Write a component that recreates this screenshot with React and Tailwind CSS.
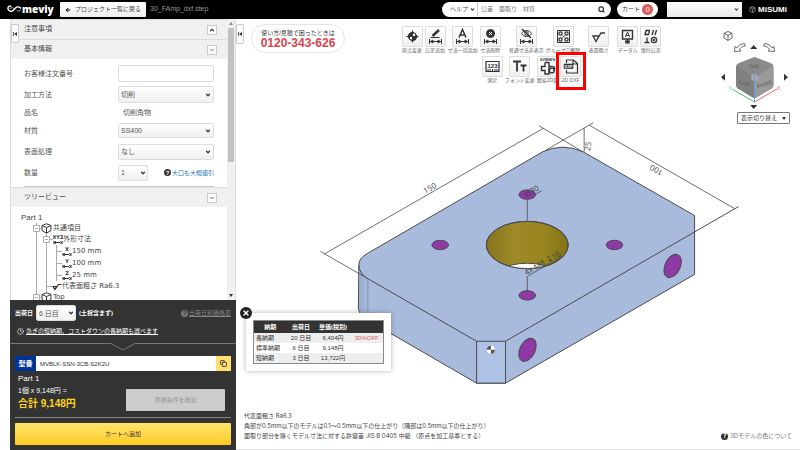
import { useState } from "react";
import { ArrowLeft, ChevronDown, ChevronUp, Search, Clock, Copy, X } from "lucide-react";

const JP = "font-['Liberation_Sans','Noto_Sans_CJK_JP',sans-serif]";

/* ---------- small parts ---------- */

function Select({ label, options, className, chevron = "right-[3px]" }) {
    return (
        <div className={"relative " + className}>
            <select
                aria-label={label}
                className="block h-full w-full appearance-none rounded-[2px] border border-[#ddd] bg-linear-to-b from-white to-[#f0f0f0] pl-[2px] text-[7px] leading-none text-[#555]"
            >
                {options.map((o) => (
                    <option key={o}>{o}</option>
                ))}
            </select>
            <ChevronDown size={6} strokeWidth={5} className={"pointer-events-none absolute top-1/2 -translate-y-1/2 text-[#333] " + chevron} />
        </div>
    );
}

function SectionHead({ title, open, onToggle }) {
    return (
        <div className="flex h-[20px] items-center justify-between border-t border-[#ddd] bg-[#f0f0f0] pr-[10px] pl-[13px] text-[7px] text-[#444]">
            <h2>{title}</h2>
            <button aria-label={title} onClick={onToggle} className="flex size-[10px] items-center justify-center border border-[#ccc] bg-[#fafafa]">
                {open ? <ChevronDown size={6} strokeWidth={3} /> : <ChevronUp size={6} strokeWidth={5} />}
            </button>
        </div>
    );
}

function Help({ className }) {
    return (
        <span className={"flex size-[7px] items-center justify-center rounded-full text-[6px] leading-none font-bold " + className}>?</span>
    );
}

function PanelTab({ className }) {
    return (
        <button aria-label="パネルを開閉" className={"absolute flex w-[8px] items-center justify-center rounded-[1px] border border-[#ccc] bg-[#fafafa] " + className}>
            <svg viewBox="0 0 5 5" className="size-[4px]" fill="#333">
                <path d="M0 0h1v5H0zM5 0v5L1.500 2.500z" />
            </svg>
        </button>
    );
}

/* ---------- header ---------- */

function Header() {
    return (
        <header className="flex h-[19px] shrink-0 items-center bg-black text-[6px]">
            <a href="#meviy" className="ml-[7px] flex w-[49px] items-center pb-[1px] text-white">
                <svg viewBox="0 0 16 8" className="h-[8px] w-[15px] shrink-0" fill="none" stroke="#fff" strokeWidth="1.500" strokeLinecap="round">
                    <path d="M4 1C1 .500.500 3 1.500 5c1 1.500 3.500 2 5 .500L9 3c1.500-1.500 4-1.500 5.500 0" />
                    <path d="M3 3.500c2-1.500 4-1 5 .500M10.500 5.500c1 1.200 3.500 1.200 4-.500" stroke="#bbb" strokeWidth="1" />
                </svg>
                <span className="font-['Open_Sans',sans-serif] text-[10px] leading-none font-extrabold">meviy</span>
            </a>
            <button className="ml-[4px] flex h-[15px] w-[86px] items-center rounded-[1px] bg-linear-to-b from-white to-[#eee] pl-[5px] whitespace-nowrap text-[#444]">
                <ArrowLeft size={6} strokeWidth={4} className="mr-[4px] text-black" />
                プロジェクト一覧に戻る
            </button>
            <span className="ml-[4px] text-[7px] text-[#999]">30_FAmp_dxf.step</span>

            <form className="ml-auto flex h-[15px] w-[169px] items-center rounded-full bg-white pr-[6px] text-[#555]">
                <div className="relative h-full w-[36px] border-r border-[#ccc]">
                    <select aria-label="検索対象" className="h-full w-full appearance-none pl-[8px] text-[6px]">
                        <option>ヘルプ</option>
                    </select>
                    <ChevronDown size={5} strokeWidth={5} className="pointer-events-none absolute top-[5px] right-[2px] text-[#222]" />
                </div>
                <input aria-label="検索" placeholder="公差　面取り　材質" className="min-w-0 flex-1 pl-[3px] text-[6px] outline-none placeholder:text-[#777]" />
                <button type="button" aria-label="検索する">
                    <Search size={7} strokeWidth={4} className="text-[#333]" />
                </button>
            </form>
            <a href="#cart" className="ml-[6px] flex h-[15px] w-[41px] items-center justify-between rounded-full bg-white pr-[5px] pl-[5px] text-[#333]">
                カート
                <span className="flex size-[11px] items-center justify-center rounded-full bg-[#e05c5c] text-[7px] leading-none text-white">0</span>
            </a>
            <div className="relative ml-[9px] h-[15px] w-[75px]">
                <select aria-label="アカウント" className="h-full w-full appearance-none bg-linear-to-b from-white to-[#e8e8e8]"></select>
                <ChevronDown size={5} strokeWidth={5} className="pointer-events-none absolute top-[5px] right-[3px] text-[#333]" />
            </div>
            <a href="#misumi" className="mr-[13px] ml-[7px] flex items-center gap-[2px] text-[8px] leading-none font-bold text-white">
                <svg viewBox="0 0 8 8" className="size-[7px]" fill="none" stroke="#999" strokeWidth=".8">
                    <path d="M4 .500 7 2v4L4 7.500 1 6V2zM1 2l3 2 3-2M4 4v3.500M2.500 1.200 5.500 3" />
                </svg>
                MiSUMi
            </a>
        </header>
    );
}

/* ---------- left panel ---------- */

function Field({ label, children, height = "h-[21px]" }) {
    return (
        <div className={"flex items-center pr-[13px] pl-[13px] " + height}>
            <span className="w-[94px] shrink-0">{label}</span>
            {children}
        </div>
    );
}

function BasicInfo() {
    return (
        <div className="bg-white pt-[4px] text-[7px] leading-none text-[#555]">
            <label className="flex h-[21px] items-center pr-[13px] pl-[13px]">
                <span className="w-[94px] shrink-0">お客様注文番号</span>
                <input type="text" className="h-[17px] min-w-0 flex-1 rounded-[2px] border border-[#ddd] px-[3px]" />
            </label>
            <Field label="加工方法">
                <Select label="加工方法" options={["切削"]} className="h-[17px] flex-1" />
            </Field>
            <Field label="品名" height="h-[15px]">
                <span className="pl-[5px]">切削角物</span>
            </Field>
            <Field label="材質">
                <Select label="材質" options={["SS400"]} className="h-[15px] flex-1" />
            </Field>
            <Field label="表面処理">
                <Select label="表面処理" options={["なし"]} className="h-[16px] flex-1" />
            </Field>
            <Field label="数量">
                <Select label="数量" options={["1"]} className="h-[16px] w-[30px]" chevron="right-[2px]" />
                <Help className="ml-auto bg-[#333] text-white" />
                <a href="#discount" className="ml-[1px] text-[6px] whitespace-nowrap text-[#1a6db5]">大口も大幅値引</a>
            </Field>
            <hr className="mx-[13px] mt-[3px] border-[#ccc]" />
        </div>
    );
}

function Minus() {
    return (
        <svg viewBox="0 0 7 7" className="-ml-[4px] size-[7px] shrink-0" fill="#fff" stroke="#aaa">
            <path d="M.500.500h6v6h-6zM2 3.500h3" />
        </svg>
    );
}

function Dash() {
    return <span className="w-[5px] shrink-0 border-t border-[#aaa]" />;
}

function CubeIcon() {
    return (
        <svg viewBox="0 0 11 11" className="mr-[1px] size-[11px] shrink-0" fill="none" stroke="#333" strokeWidth="1">
            <path d="M5.500.800 10 2.500v5L5.500 10.200 1 7.500v-5zM1 2.500l4.500 2 4.500-2M5.500 4.500v5.500" />
        </svg>
    );
}

function AxisIcon({ name }) {
    return (
        <svg viewBox="0 0 10 11" className="h-[11px] w-[10px] shrink-0" fill="#333">
            <text x="5" y="5" fontSize="5" fontWeight="bold" textAnchor="middle">{name}</text>
            <path d="M1 8.500 3 6.800v3.400zM9 8.500 7 6.800v3.400zM2 8h6v1H2zM.500 7h1v3h-1zM8.500 7h1v3h-1z" />
        </svg>
    );
}

function TreeView() {
    const sizes = [
        ["X", "150 mm"],
        ["Y", "100 mm"],
        ["Z", "25 mm"],
    ];
    return (
        <div className="bg-white pt-[5px] pl-[10px] text-[7px] leading-none text-[#444]">
            <div className="flex h-[11px] items-center text-[8px]">Part 1</div>
            <ul className="ml-[15px] border-l border-[#aaa] font-['DejaVu_Sans','Noto_Sans_CJK_JP',sans-serif]">
                <li>
                    <div className="flex h-[11px] items-center">
                        <Minus /><span className="w-px border-t border-[#aaa]" /><CubeIcon />共通項目
                    </div>
                    <ul className="ml-[9px] border-l border-[#aaa]">
                        <li>
                            <div className="flex h-[11px] items-center">
                                <Minus /><span className="w-[3px] border-t border-[#aaa]" /><AxisIcon name="XYZ" />外形寸法
                            </div>
                            <ul className="ml-[9px] border-l border-[#aaa]">
                                {sizes.map(([axis, size]) => (
                                    <li key={axis} className="flex h-[12px] items-center">
                                        <Dash /><AxisIcon name={axis} />{size}
                                    </li>
                                ))}
                            </ul>
                        </li>
                        <li className="flex h-[11px] items-center">
                            <Dash />
                            <svg viewBox="0 0 10 9" className="h-[9px] w-[10px] shrink-0" fill="none" stroke="#333" strokeWidth="1.200">
                                <path d="M1 4.500h3.500L2.800 7.500zM3 7.500 6.500 2.500H9.500" />
                            </svg>
                            代表面粗さ Ra6.3
                        </li>
                    </ul>
                </li>
                <li className="flex h-[11px] items-center">
                    <Minus /><span className="w-px border-t border-[#aaa]" /><CubeIcon />Top
                </li>
            </ul>
        </div>
    );
}

function OrderBox() {
    return (
        <section className="shrink-0 bg-[#333] px-[5px] py-[5px] text-[6px] leading-none text-white">
            <div className="flex h-[16px] items-center whitespace-nowrap">
                <span className="font-bold">出荷日</span>
                <Select label="出荷日" options={["6 日目"]} className="mx-[3px] h-[16px] w-[40px]" chevron="right-[2px]" />
                <span className="font-bold">(土祝含まず)</span>
                <Help className="ml-auto bg-[#777] text-[#333]" />
                <a href="#prices" className="ml-[1px] text-[#888] underline">出荷日別価格表</a>
            </div>
            <div className="flex h-[20px] items-center gap-[2px] pl-[2px]">
                <Clock size={7} strokeWidth={2} />
                <a href="#schedule" className="whitespace-nowrap underline">急ぎの短納期、コストダウンの長納期も選べます</a>
            </div>
            <div className="-mx-[5px] flex h-[15px] items-start pt-[2px]">
                <span className="h-px flex-1 bg-[#777]" />
                <svg viewBox="0 0 24 9" className="h-[9px] w-[24px]" fill="none" stroke="#777">
                    <path d="M0 .500 12 7 24 .500" />
                </svg>
                <span className="h-px flex-1 bg-[#777]" />
            </div>
            <div className="flex h-[15px] items-stretch bg-white text-[#333]">
                <span className="flex w-[21px] items-center justify-center bg-[#003399] text-[7px] font-bold text-white">型番</span>
                <span className="flex flex-1 items-center pl-[4px]">MVBLK-SSN-3CB-S2K2U</span>
                <button aria-label="コピー" className="flex w-[15px] items-center justify-center bg-[#ffe070]">
                    <Copy size={7} strokeWidth={3} />
                </button>
            </div>
            <div className="flex items-end justify-between border-b border-[#888] pt-[2px] pr-[6px] pb-[6px] pl-[3px]">
                <div className="whitespace-nowrap">
                    <p className="text-[8px] leading-[11px]">Part 1</p>
                    <p className="text-[7px] leading-[13px]">1個 x 9,148円 =</p>
                    <p className="text-[10px] leading-[14px] font-bold text-[#ffd21f]">合計 9,148円</p>
                </div>
                <button disabled className="h-[22px] w-[99px] rounded-[1px] bg-[#ccc] text-[#999]">見積条件を確定</button>
            </div>
            <button className="mt-[5px] h-[22px] w-full rounded-[1px] bg-linear-to-b from-[#ffe36a] to-[#ffcb17] text-[#333]">カートへ追加</button>
        </section>
    );
}

function SidePanel() {
    const [notice, setNotice] = useState(false);
    const [basic, setBasic] = useState(true);
    const [tree, setTree] = useState(true);
    return (
        <aside className="relative ml-[10px] flex w-[226px] shrink-0 flex-col">
            <div className="flex min-h-0 flex-1 overflow-hidden">
                <div className="min-w-0 flex-1 border-l border-[#ddd]">
                    <SectionHead title="注意事項" open={notice} onToggle={() => setNotice(!notice)} />
                    <SectionHead title="基本情報" open={basic} onToggle={() => setBasic(!basic)} />
                    {basic && <BasicInfo />}
                    <SectionHead title="ツリービュー" open={tree} onToggle={() => setTree(!tree)} />
                    {tree && <TreeView />}
                </div>
                <div className="flex w-[9px] flex-col items-center justify-between border-r border-[#ddd] bg-[#f0f0f0] py-[3px]">
                    <svg viewBox="0 0 4 3" className="h-[3px] w-[4px]" fill="#888"><path d="M2 0 4 3H0z" /></svg>
                    <div className="mt-[3px] mb-auto h-[134px] w-[6px] bg-[#c1c1c1]" />
                    <svg viewBox="0 0 4 3" className="h-[3px] w-[4px]" fill="#333"><path d="M0 0h4L2 3z" /></svg>
                </div>
            </div>
            <OrderBox />
            <PanelTab className="top-[5px] left-[1px] h-[19px]" />
        </aside>
    );
}

/* ---------- toolbar ---------- */

const dimLine = "M4.500 13v5M16.500 13v5M5 15.500h11M5.500 15.500l2.500-1.500v3zM15.500 15.500l-2.500-1.500v3z";

const icons = {
    origin: (
        <>
            <circle cx="10.500" cy="10.500" r="4" fill="#fff" />
            <path d="M10.500 6.500v4h-4a4 4 0 0 1 4-4M10.500 14.500v-4h4a4 4 0 0 1-4 4" fill="#333" />
            <path d="M10.500 4.500v12M4.500 10.500h12" />
            <path d="M5 10.500l3-3v6zM16 10.500l-3-3v6zM10.500 5l2.500 2.500h-5zM10.500 16l2.500-2.500h-5z" fill="#333" stroke="none" />
        </>
    ),
    pen: (
        <>
            <path d={dimLine} />
            <path d="M7.500 10l6.500-6" strokeWidth="2.400" />
            <path d="M5.500 11.500h9" />
        </>
    ),
    letter: (
        <>
            <path d={dimLine} />
            <path d="M7 11.500 10.500 3.500 14 11.500M8.200 9h4.600" strokeWidth="1.500" />
        </>
    ),
    remove: (
        <>
            <path d={dimLine} />
            <circle cx="10.500" cy="7.500" r="4" fill="#333" />
            <path d="M9 6l3 3M12 6 9 9" stroke="#fff" />
        </>
    ),
    hide: (
        <>
            <path d={dimLine} />
            <path d="M5.500 7.500c2.500-4 7.500-4 10 0-2.500 4-7.500 4-10 0z" />
            <circle cx="10.500" cy="7.500" r="1.800" />
            <path d="M6 3l9 9" strokeWidth="1.400" />
        </>
    ),
    holes: (
        <>
            <path d="M4.500 4.500h12v12h-12z" />
            <circle cx="7.500" cy="7.500" r="1.600" strokeWidth="1.300" />
            <circle cx="13.500" cy="7.500" r="1.600" strokeWidth="1.300" />
            <circle cx="7.500" cy="13.500" r="1.600" strokeWidth="1.300" />
            <circle cx="13.500" cy="13.500" r="1.600" strokeWidth="1.300" />
            <path d="M9.500 9.500l2 2M11.500 9.500l-2 2" />
        </>
    ),
    rough: <path d="M5 10h6L8 15.500zM8 15.500 13 7h4" strokeWidth="1.300" />,
    datum: (
        <>
            <path d="M5.500 4.500h10v8.500h-10zM10.500 13v3" strokeWidth="1.400" />
            <path d="M8 15h5l-2.500 2zM8 17h5" fill="#333" />
            <path d="M8.300 11 10.500 6 12.700 11M9 9.400h3" />
        </>
    ),
    geo: (
        <>
            <path d="M5 8.500h3.500L9.500 4.500H6zM12 9l1.500-5M15 9l1.500-5" strokeWidth="1.300" />
            <path d="M4.500 16.500h5M7 16.500v-5" strokeWidth="1.300" />
            <circle cx="14" cy="14" r="2.600" strokeWidth="1.300" />
            <circle cx="14" cy="14" r=".8" fill="#333" />
        </>
    ),
    measure: (
        <>
            <path d="M4 5.500h13v10H4z" strokeWidth="1.200" />
            <path d="M6 15v-2M8 15v-2M10.500 15v-2M13 15v-2M15 15v-2" />
            <text x="10.500" y="11.500" fontSize="6" fontWeight="bold" textAnchor="middle" fill="#333" stroke="none">123</text>
        </>
    ),
    font: <path d="M4 5.500h8M8 5.500v10M11.500 9.500h6M14.500 9.500v6" strokeWidth="1.800" />,
    draft: (
        <>
            <text x="10.500" y="5" fontSize="4" fontWeight="bold" textAnchor="middle" fill="#333" stroke="none">6VIEWS</text>
            <path d="M8 6.500h4v4h3.500M8 6.500v4H4.500v4H8v3.500h4v-7.500" strokeWidth="1.400" />
            <circle cx="14.800" cy="14.500" r="2.400" strokeWidth="1.400" />
            <path d="M15.500 10.500q2 0 2 2v2" strokeWidth="1.400" />
        </>
    ),
    dxf: (
        <>
            <path d="M6.500 7V4h7l4 3.500V17h-11v-3M13 4v4h4" strokeWidth="1.200" />
            <path d="M4 8h9v4.500H4z" fill="#333" strokeWidth=".6" />
            <text x="8.500" y="11.800" fontSize="4" fontWeight="bold" textAnchor="middle" fill="#fff" stroke="none">DXF</text>
        </>
    ),
};

const toolRows = [
    [
        [["origin", "原点変更"], ["pen", "公差追加"], ["letter", "寸法一括追加"], ["remove", "寸法削除"]],
        [["hide", "普通寸法非表示"], ["holes", "グループ穴解除"]],
        [["rough", "表面粗さ"]],
        [["datum", "データム"], ["geo", "幾何公差"]],
    ],
    [[["measure", "測定"], ["font", "フォント変更"], ["draft", "簡易2D図"], ["dxf", "2D DXF"]]],
];

function Tool({ icon, label }) {
    return (
        <button className="relative flex min-w-[21px] flex-col items-center">
            <span className="size-[21px] rounded-[1px] border border-[#ddd] bg-linear-to-b from-white to-[#f0f0f0]">
                <svg viewBox="1 1 19 19" className="size-full" fill="none" stroke="#333">{icons[icon]}</svg>
            </span>
            <span className="h-[7px] text-[5px] leading-[7px] whitespace-nowrap text-[#666]">{label}</span>
            {icon === "dxf" && <span className="absolute -top-[4px] -left-[4px] h-[38px] w-[30px] border-[3px] border-[#f00]" />}
        </button>
    );
}

function Toolbar() {
    return (
        <div className="flex flex-col items-center gap-[2px]">
            {toolRows.map((groups, i) => (
                <div key={i} className="flex gap-[8px]">
                    {groups.map((tools, j) => (
                        <div key={j} className="flex gap-[2px]">
                            {tools.map(([icon, label]) => (
                                <Tool key={icon} icon={icon} label={label} />
                            ))}
                        </div>
                    ))}
                </div>
            ))}
        </div>
    );
}

/* ---------- model view ---------- */

function Model() {
    return (
        <svg viewBox="236 19 564 431" className="absolute inset-0 h-full w-full" fill="none" stroke="#4a4a4a" strokeWidth="1">
            <defs>
                <linearGradient id="bore">
                    <stop offset="0" stopColor="#85751d" />
                    <stop offset=".35" stopColor="#9d8a27" />
                    <stop offset=".7" stopColor="#97851f" />
                    <stop offset="1" stopColor="#837318" />
                </linearGradient>
                <linearGradient id="round">
                    <stop offset="0" stopColor="#97a9cd" />
                    <stop offset="1" stopColor="#a8bbdd" />
                </linearGradient>
                <clipPath id="boreClip">
                    <ellipse cx="527.300" cy="245.500" rx="41" ry="23.700" />
                </clipPath>
            </defs>

            <path
                d="M358.500 266Q358 259 367 254L543 152Q563 143 583 152L695 216V275L505.500 384H476.500L366 320Q358 315 358 308Z"
                fill="#a8bbdd"
            />
            <path d="M359 268Q360 274 367 279V320Q359 316 359 308Z" fill="url(#round)" stroke="none" />
            <path d="M367.500 279V320" stroke="#8593b3" />
            <path d="M476.500 342h29v42h-29z" fill="#aec2e6" />
            <path d="M476.500 342 367 279Q359 274 358.500 266M505.500 342 739 207" />

            <ellipse cx="527.300" cy="245.500" rx="41" ry="23.700" fill="url(#bore)" />
            <ellipse cx="527.300" cy="287.500" rx="41" ry="23.700" fill="#fff" clipPath="url(#boreClip)" />
            <ellipse cx="527.300" cy="245.500" rx="41" ry="23.700" />

            <g fill="#8e39a6">
                <ellipse cx="527.300" cy="195" rx="8.300" ry="4.700" />
                <ellipse cx="440" cy="245.500" rx="8.300" ry="4.700" />
                <ellipse cx="614.700" cy="245.500" rx="8.300" ry="4.700" />
                <ellipse cx="527.300" cy="296" rx="8.300" ry="4.700" />
                <ellipse cx="673" cy="266.500" rx="7.600" ry="12.300" transform="rotate(26 673 266.500)" />
                <ellipse cx="527.500" cy="350.500" rx="7.600" ry="12.300" transform="rotate(26 527.500 350.500)" />
            </g>

            {/* dimensions */}
            <g strokeWidth=".8">
                <path d="M324 254.500 543.500 128.500M320 252 367 279M539 126 583 152" />
                <path d="M589.500 125.500 735 209M593.500 123 545 151M584.300 128V152" />
                <path d="M527.300 200V221M534 195.500 542 191M527.300 292V277L562 257" />
            </g>
            <g fill="#444" stroke="none" fontSize="8" textAnchor="middle" fontFamily="Open Sans, sans-serif">
                <text transform="translate(431 191) rotate(-30)">150</text>
                <text transform="translate(658 168) rotate(210)">100</text>
                <text transform="translate(591 147) rotate(-80)">25</text>
                <text transform="translate(533 194) rotate(-30)">Ø30</text>
                <text transform="translate(544 266) rotate(-30)">4x M8 ↧16</text>
            </g>

            <circle cx="490.800" cy="350.500" r="4" fill="#fff" stroke="none" />
            <path d="M490.800 346.500v4h-4a4 4 0 0 1 4-4M490.800 354.500v-4h4a4 4 0 0 1-4 4" fill="#555" stroke="none" />
        </svg>
    );
}

function ViewCube() {
    return (
        <svg viewBox="718 28 76 84" className="h-[84px] w-[76px]" fill="none" stroke="#444" strokeWidth="1">
            <path d="M728 31.500l4 1.800v4.700l-4 2.500-4-2.500v-4.700zM724 33.300l4 2 4-2M728 35.300v5" strokeWidth=".8" />
            <path d="M734.500 51.500l.5-5 1.800 1.500c2-3 4.200-4 7.700-4.500l.8 2.500c-3 .3-4.500 1.500-6 3.500l1.700 1.500z" strokeWidth=".8" />
            <path d="M774.500 51.500l-.5-5-1.800 1.500c-2-3-4.200-4-7.700-4.500l-.8 2.500c3 .3 4.500 1.500 6 3.500l-1.700 1.500z" strokeWidth=".8" />
            <path d="M753.700 45l3.500 4h-7zM753.700 109l3.500-4h-7zM721 77.200l4-3.500v7zM788 77.200l-4-3.500v7z" fill="#333" stroke="none" />
            <path d="M754.500 57l16 6q3 1 3 4v18q0 2-2 3.500L754.500 98.500 738 88.500q-2-1.500-2-3.500V67q0-3 3-4z" fill="#8a8a8a" stroke="none" />
            <path d="M754.500 78 772.500 66q1 1 1 3v16q0 2-2 3.500L754.500 98.500z" fill="#9a9a9a" stroke="none" />
            <path d="M754.500 78 737 66q-1 1-1 3v16q0 2 2 3.500l16.500 10z" fill="#808080" stroke="none" />
            <circle cx="754.500" cy="77.500" r="3.500" fill="#a8a8a8" stroke="none" />
            <g fill="#6c6c6c" stroke="none" fontSize="6" fontWeight="bold" textAnchor="middle">
                <text transform="translate(754 68) rotate(-10)">Top</text>
                <text transform="translate(744 85) rotate(20)">Left</text>
                <text transform="translate(765 86) rotate(-20)">Front</text>
            </g>
            <path d="M754.500 102V73" stroke="#5aa2ee" />
            <path d="M754.500 102 732 89" stroke="#3fbf6a" />
            <path d="M754.500 102 777 89" stroke="#e66" />
            <text x="728.500" y="90" fontSize="5" fill="#3fbf6a" stroke="none">Y</text>
            <text x="777" y="90" fontSize="5" fill="#e55" stroke="none">X</text>
        </svg>
    );
}

function DeliveryPopup() {
    const rows = [
        ["長納期", "20 日目", "6,404円", "30%OFF"],
        ["標準納期", "6 日目", "9,148円", ""],
        ["短納期", "3 日目", "13,722円", ""],
    ];
    return (
        <div className="absolute bottom-[78px] left-[10px] w-[145px] bg-white p-[7px] shadow-[0_0_5px_rgba(0,0,0,0.3)]">
            <button aria-label="閉じる" className="absolute -top-[6px] -left-[6px] flex size-[12px] items-center justify-center rounded-full bg-[#222] text-white">
                <X size={8} strokeWidth={4} />
            </button>
            <table className="w-full table-fixed border border-[#888] text-center text-[6px] leading-[10px] whitespace-nowrap text-[#333]">
                <thead className="bg-[#333] leading-[12px] text-white">
                    <tr>
                        <th className="w-[33px]">納期</th>
                        <th className="w-[29px]">出荷日</th>
                        <th className="w-[35px]">単価(税別)</th>
                        <th aria-label="割引"></th>
                    </tr>
                </thead>
                <tbody>
                    {rows.map(([name, day, price, off]) => (
                        <tr key={name} className="odd:bg-[#eee]">
                            <td className="pl-[2px] text-left">{name}</td>
                            <td>{day}</td>
                            <td>{price}</td>
                            <td className="text-[#e05c5c]">{off}</td>
                        </tr>
                    ))}
                </tbody>
            </table>
        </div>
    );
}

function Viewer() {
    return (
        <main className="relative flex min-w-0 flex-1 flex-col justify-between border-b border-[#ddd]">
            <Model />
            <div className="relative flex items-start justify-between pt-[5px] pr-[6px] pl-[15px]">
                <a href="tel:0120343626" className="flex h-[29px] w-[94px] flex-col items-center justify-center rounded-full border border-[#e4e4e4] bg-white whitespace-nowrap">
                    <span className="text-[6px] leading-[9px] text-[#333]">使い方/見積で困ったときは</span>
                    <span className="text-[12px] leading-[11px] font-bold text-[#d9434e]">0120-343-626</span>
                </a>
                <div className="pt-[2px]">
                    <Toolbar />
                </div>
                <div className="flex flex-col items-end pt-[4px]">
                    <ViewCube />
                    <button className="mr-[4px] flex h-[12px] w-[53px] items-center justify-between rounded-[1px] border border-[#777] bg-white px-[3px] text-[6px] whitespace-nowrap text-[#333]">
                        表示切り替え
                        <svg viewBox="0 0 4 3" className="h-[3px] w-[4px]" fill="#333"><path d="M0 0h4L2 3z" /></svg>
                    </button>
                </div>
            </div>
            <PanelTab className="top-[5px] left-0 h-[20px]" />
            <DeliveryPopup />
            <footer className="relative flex items-end justify-between pr-[8px] pb-[8px] pl-[8px] font-['Inter','Noto_Sans_CJK_JP',sans-serif] text-[6px] leading-[10px] whitespace-nowrap text-[#444]">
                <div>
                    <p>代表面粗さ Ra6.3</p>
                    <p>角部が0.5mm以下のモデルは0.1〜0.5mm以下の仕上がり（隅部は0.5mm以下の仕上がり）</p>
                    <p>面取り部分を除くモデル寸法に対する許容差 JIS B 0405 中級 （原点を加工基準とする）</p>
                </div>
                <a href="#colors" className="flex items-center gap-[2px] text-[#777]">
                    <Help className="bg-[#333] text-white" />
                    3Dモデルの色について
                </a>
            </footer>
        </main>
    );
}

function App() {
    return (
        <div lang="ja" className={"flex h-screen flex-col overflow-hidden bg-white text-[7px] " + JP}>
            <Header />
            <div className="flex min-h-0 flex-1">
                <SidePanel />
                <Viewer />
            </div>
        </div>
    );
}

export default App;
